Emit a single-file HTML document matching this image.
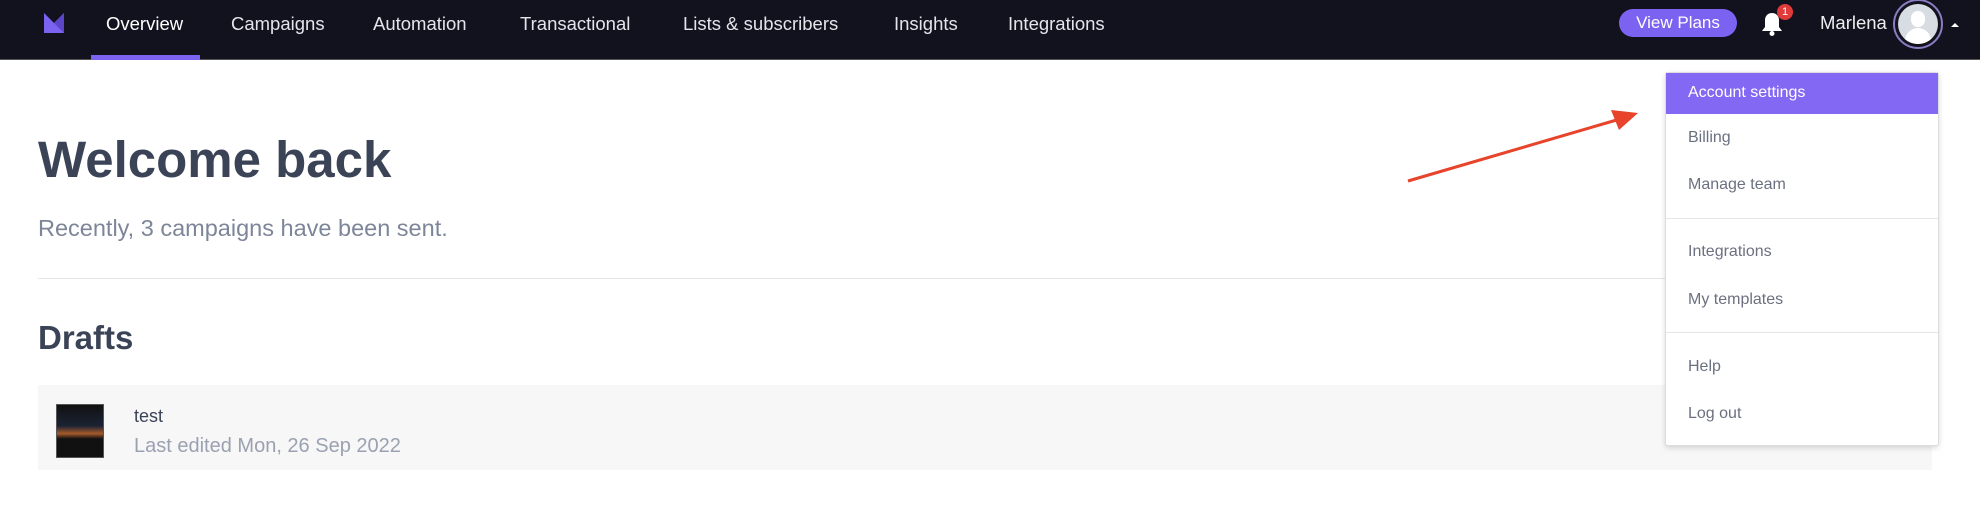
<!DOCTYPE html>
<html><head><meta charset="utf-8"><style>
*{margin:0;padding:0;box-sizing:border-box}
body{width:1980px;height:507px;background:#fff;font-family:"Liberation Sans",sans-serif;position:relative;overflow:hidden}
.nav{position:absolute;left:0;top:0;width:1980px;height:60px;background:#12121f;border-bottom:1px solid #555}
.ni{position:absolute;top:12px;color:#e4e4ea;font-size:18.5px;line-height:24px}
.ul{position:absolute;left:91px;top:55px;width:109px;height:5px;background:#7c62f0}
.abs{position:absolute}
.dd{position:absolute;left:1665px;top:72px;width:274px;height:374px;background:#fff;border:1px solid #ddd;border-radius:3px;box-shadow:0 2px 6px rgba(0,0,0,.15)}
.di{position:absolute;left:22px;font-size:16px;color:#6b7080}
.sep{position:absolute;left:0;width:272px;height:1px;background:#e6e6ea}
</style></head><body>
<div class="nav">
 <svg class="abs" style="left:44px;top:13px" width="20" height="20" viewBox="0 0 20 20"><path d="M0 0 L10 10 L20 0 V20 H0Z" fill="#7c62f0"/><path d="M0 0 L10 10 L20 0 L20 20 Z" fill="#5b45c8"/></svg>
 <div class="ni" style="left:106px;color:#fff">Overview</div>
 <div class="ni" style="left:231px">Campaigns</div>
 <div class="ni" style="left:373px">Automation</div>
 <div class="ni" style="left:520px">Transactional</div>
 <div class="ni" style="left:683px">Lists &amp; subscribers</div>
 <div class="ni" style="left:894px">Insights</div>
 <div class="ni" style="left:1008px">Integrations</div>
 <div class="ul"></div>
 <div class="abs" style="left:1619px;top:9px;width:118px;height:28px;border-radius:14px;background:#7c62f0;color:#fff;font-size:17px;line-height:28px;text-align:center">View Plans</div>
 <svg class="abs" style="left:1761px;top:11px" width="22" height="26" viewBox="0 0 22 26"><path d="M11 2c-4 0-7 3-7 7v7l-3 4h20l-3-4V9c0-4-3-7-7-7z" fill="#fff"/><circle cx="11" cy="22.5" r="2.5" fill="#fff"/></svg>
 <div class="abs" style="left:1777px;top:4px;width:16px;height:16px;border-radius:8px;background:#e03a3a;color:#fff;font-size:11px;line-height:16px;text-align:center">1</div>
 <div class="ni" style="left:1820px;top:11px;color:#eee">Marlena</div>
 <div class="abs" style="left:1893px;top:-1px;width:50px;height:50px;border-radius:25px;border:2px solid #8a7cc0;padding:3px"><div style="width:40px;height:40px;border-radius:20px;background:#d8dce3;position:relative;overflow:hidden"><div style="position:absolute;left:13px;top:7px;width:14px;height:16px;border-radius:7px;background:#fff"></div><div style="position:absolute;left:7px;top:24px;width:26px;height:20px;border-radius:13px 13px 0 0;background:#fff"></div></div></div>
 <div class="abs" style="left:1951px;top:23px;border-left:4px solid transparent;border-right:4px solid transparent;border-bottom:4px solid #fff"></div>
</div>
<div class="abs" style="left:38px;top:130px;font-size:51px;font-weight:bold;color:#3b4356">Welcome back</div>
<div class="abs" style="left:38px;top:215px;font-size:23.5px;color:#7d8699">Recently, 3 campaigns have been sent.</div>
<div class="abs" style="left:38px;top:278px;width:1900px;height:1px;background:#e4e6ea"></div>
<div class="abs" style="left:38px;top:319px;font-size:33px;font-weight:bold;color:#3b4356">Drafts</div>
<div class="abs" style="left:38px;top:385px;width:1894px;height:85px;background:#f7f7f8"></div>
<div class="abs" style="left:56px;top:404px;width:48px;height:54px;background:linear-gradient(#111 0%,#1a2233 40%,#a55a2a 55%,#111 65%,#111 100%);border:1px solid #555"></div>
<div class="abs" style="left:134px;top:406px;font-size:18px;color:#3b4356">test</div>
<div class="abs" style="left:134px;top:435px;font-size:20px;color:#9aa1b0">Last edited Mon, 26 Sep 2022</div>
<svg class="abs" style="left:0;top:0" width="1980" height="507"><line x1="1408" y1="181" x2="1620" y2="119" stroke="#e8432b" stroke-width="3"/><path d="M1638 113 L1611 110 L1619 130Z" fill="#e8432b"/></svg>
<div class="dd">
 <div class="abs" style="left:0;top:0;width:272px;height:41px;background:#8268f2"></div>
 <div class="di" style="top:11px;color:#fff">Account settings</div>
 <div class="di" style="top:56px">Billing</div>
 <div class="di" style="top:103px">Manage team</div>
 <div class="sep" style="top:145px"></div>
 <div class="di" style="top:170px">Integrations</div>
 <div class="di" style="top:218px">My templates</div>
 <div class="sep" style="top:259px"></div>
 <div class="di" style="top:285px">Help</div>
 <div class="di" style="top:332px">Log out</div>
</div>
</body></html>
